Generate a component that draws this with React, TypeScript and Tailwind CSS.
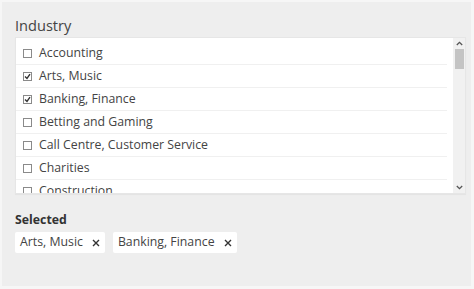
import React, {useState} from 'react';

const industries = [
  "Accounting",
  "Arts, Music",
  "Banking, Finance",
  "Betting and Gaming",
  "Call Centre, Customer Service",
  "Charities",
  "Construction",
];

function CheckBox({checked}: {checked: boolean}) {
  return (
    <span className="w-[9px] h-[9px] border border-[#8a8a8a] bg-white flex items-center justify-center shrink-0">
      {checked &&
        <svg width="7" height="7" viewBox="0 0 7 7">
          <path d="M1 3.5 L3 5.5 L6 1.2" stroke="#333" strokeWidth="1.4" fill="none"/>
        </svg>
      }
    </span>
  );
}

function Scrollbar() {
  return (
    <div className="w-[12px] bg-[#f1f1f1] flex flex-col items-center shrink-0">
      <div className="h-[11px] flex items-center justify-center">
        <svg width="7" height="5" viewBox="0 0 7 5">
          <path d="M0.8 4 L3.5 1.3 L6.2 4" stroke="#555" strokeWidth="1.3" fill="none"/>
        </svg>
      </div>
      <div className="w-[9px] h-[20px] bg-[#c4c4c4]"/>
      <div className="flex-1"/>
      <div className="h-[11px] flex items-center justify-center">
        <svg width="7" height="5" viewBox="0 0 7 5">
          <path d="M0.8 1 L3.5 3.7 L6.2 1" stroke="#555" strokeWidth="1.3" fill="none"/>
        </svg>
      </div>
    </div>
  );
}

export default function App() {
  const [selected, setSelected] = useState<string[]>(["Arts, Music", "Banking, Finance"]);

  function toggle(name: string) {
    setSelected(s => s.includes(name) ? s.filter(x => x !== name) : [...s, name]);
  }

  return (
    <div className="w-[474px] h-[289px] bg-[#f6f6f6] pt-[2px] pl-[2px] pr-[3px] pb-[3px]" style={{fontFamily: '"Open Sans", sans-serif'}}>
      <div className="h-full bg-[#eeeeee] pl-[13px] pr-[5px] pt-[13px] text-[#444]">
        <h1 className="text-[14.6px] leading-[20px] text-[#444] mb-[2px]">Industry</h1>
        <div className="h-[157px] bg-white flex border border-[#e6e6e6] shadow-[0_1px_1px_rgba(0,0,0,0.04)]">
          <ul className="flex-1 overflow-hidden pt-[4px] mr-[6px]">
            {industries.map(name =>
              <li
                key={name}
                onClick={() => toggle(name)}
                className="h-[23px] shrink-0 flex items-center gap-[7px] pl-[7px] border-b border-[#f0f0f0] text-[12.3px] text-[#444] cursor-pointer"
              >
                <CheckBox checked={selected.includes(name)}/>
                <span>{name}</span>
              </li>
            )}
          </ul>
          <Scrollbar/>
        </div>
        <h2 className="mt-[17px] font-bold text-[12.3px] leading-[18px] text-[#333]">Selected</h2>
        <div className="mt-[3px] flex gap-[8px]">
          {selected.map(name =>
            <span key={name} className="h-[21px] bg-white rounded-[2px] pl-[5px] pr-[5px] flex items-center gap-[9px] text-[12.3px] text-[#444]">
              {name}
              <button onClick={() => toggle(name)} className="flex items-center">
                <svg width="8" height="8" viewBox="0 0 8 8">
                  <path d="M1 1 L7 7 M7 1 L1 7" stroke="#333" strokeWidth="1.4"/>
                </svg>
              </button>
            </span>
          )}
        </div>
      </div>
    </div>
  );
}
